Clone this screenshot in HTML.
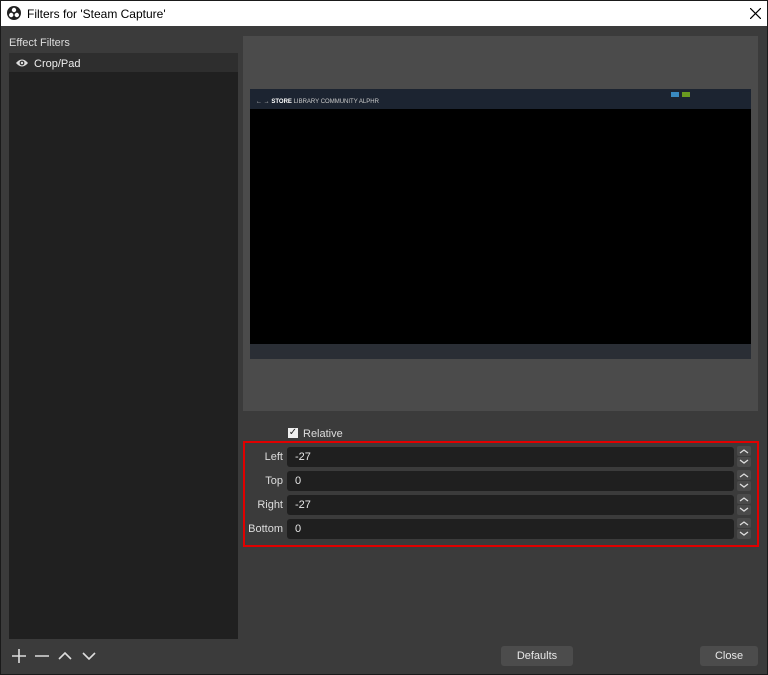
<!DOCTYPE html>
<html><head><style>
body{margin:0;width:768px;height:675px;overflow:hidden;font-family:"Liberation Sans",sans-serif;font-size:11px;color:#ddd;}
.win{position:absolute;left:0;top:0;width:766px;height:673px;border:1px solid #1a1a1a;background:#3b3b3b;}
.title{position:absolute;left:0;top:0;width:766px;height:25px;background:#fff;color:#000;font-size:12px;}
.abs{position:absolute;}
.field{position:absolute;left:286px;width:447px;height:20px;background:#1f1f1f;border-radius:3px;color:#e8e8e8;line-height:20px;text-indent:8px;}
.lbl{position:absolute;width:60px;text-align:right;line-height:20px;}
.spin{position:absolute;left:736px;width:14px;height:10px;background:#4a4a4a;border-radius:2px;}
.btn{position:absolute;height:20px;background:#4c4c4c;border-radius:3px;text-align:center;line-height:20px;color:#e8e8e8;}
</style></head><body>
<div class="win">
<div class="title">
<svg class="abs" style="left:6px;top:5px" width="14" height="14" viewBox="0 0 14 14"><circle cx="7" cy="7" r="7" fill="#222"/><circle cx="7" cy="4" r="2.2" fill="#fff"/><circle cx="4.2" cy="9" r="2.2" fill="#fff"/><circle cx="9.8" cy="9" r="2.2" fill="#fff"/></svg>
<span class="abs" style="left:26px;top:6px">Filters for 'Steam Capture'</span>
<svg class="abs" style="left:749px;top:7px" width="11" height="11" viewBox="0 0 11 11" stroke="#000" stroke-width="1.2"><path d="M0 0L11 11M11 0L0 11"/></svg>
</div>
<span class="abs" style="left:8px;top:36px">Effect Filters</span>
<div class="abs" style="left:8px;top:52px;width:229px;height:586px;background:#202020"></div>
<div class="abs" style="left:8px;top:52px;width:229px;height:19px;background:#2e2e2e"></div>
<svg class="abs" style="left:14px;top:57px" width="14" height="10" viewBox="0 0 14 10"><path d="M1 5Q7 -2 13 5Q7 12 1 5Z" fill="#ddd"/><circle cx="7" cy="5" r="2.4" fill="#2e2e2e"/><circle cx="7" cy="5" r="1.2" fill="#ddd"/></svg>
<span class="abs" style="left:33px;top:57px;color:#eee">Crop/Pad</span>
<div class="abs" style="left:242px;top:35px;width:515px;height:375px;background:#4b4b4b"></div>
<div class="abs" style="left:249px;top:88px;width:501px;height:20px;background:#1c2431"></div>
<span class="abs" style="left:255px;top:98px;font-size:6px;color:#ccc">← → <b style="color:#fff">STORE</b> LIBRARY COMMUNITY ALPHR</span>
<div class="abs" style="left:670px;top:91px;width:8px;height:5px;background:#3a8ac0"></div>
<div class="abs" style="left:681px;top:91px;width:8px;height:5px;background:#6a9a20"></div>
<div class="abs" style="left:249px;top:108px;width:501px;height:235px;background:#000"></div>
<div class="abs" style="left:249px;top:343px;width:501px;height:15px;background:#2a2e35"></div>
<div class="abs" style="left:287px;top:427px;width:10px;height:10px;background:#eee;color:#222;font-size:10px;line-height:10px;text-align:center">✓</div>
<span class="abs" style="left:302px;top:427px">Relative</span>
<div class="abs" style="left:242px;top:440px;width:512px;height:102px;border:2px solid #e00000"></div>
<span class="lbl" style="top:446px;left:222px">Left</span><div class="field" style="top:446px">-27</div>
<span class="lbl" style="top:470px;left:222px">Top</span><div class="field" style="top:470px">0</div>
<span class="lbl" style="top:494px;left:222px">Right</span><div class="field" style="top:494px">-27</div>
<span class="lbl" style="top:518px;left:222px">Bottom</span><div class="field" style="top:518px">0</div>
<div class="spin" style="top:445px"></div><div class="spin" style="top:456px"></div>
<div class="spin" style="top:469px"></div><div class="spin" style="top:480px"></div>
<div class="spin" style="top:493px"></div><div class="spin" style="top:504px"></div>
<div class="spin" style="top:517px"></div><div class="spin" style="top:528px"></div>
<svg class="abs" style="left:736px;top:445px" width="14" height="94" viewBox="0 0 14 94" fill="none" stroke="#ddd" stroke-width="1.3">
<path d="M3 7l4-3 4 3M3 14l4 3 4-3M3 31l4-3 4 3M3 38l4 3 4-3M3 55l4-3 4 3M3 62l4 3 4-3M3 79l4-3 4 3M3 86l4 3 4-3"/></svg>
<svg class="abs" style="left:10px;top:646px" width="90" height="18" viewBox="0 0 90 18" fill="none" stroke="#ddd" stroke-width="1.6">
<path d="M8 2v14M1 9h14M24 9h14M48 12l6-6 6 6M72 6l6 6 6-6"/></svg>
<div class="btn" style="left:500px;top:645px;width:72px">Defaults</div>
<div class="btn" style="left:699px;top:645px;width:58px">Close</div>
</div>
</body></html>
